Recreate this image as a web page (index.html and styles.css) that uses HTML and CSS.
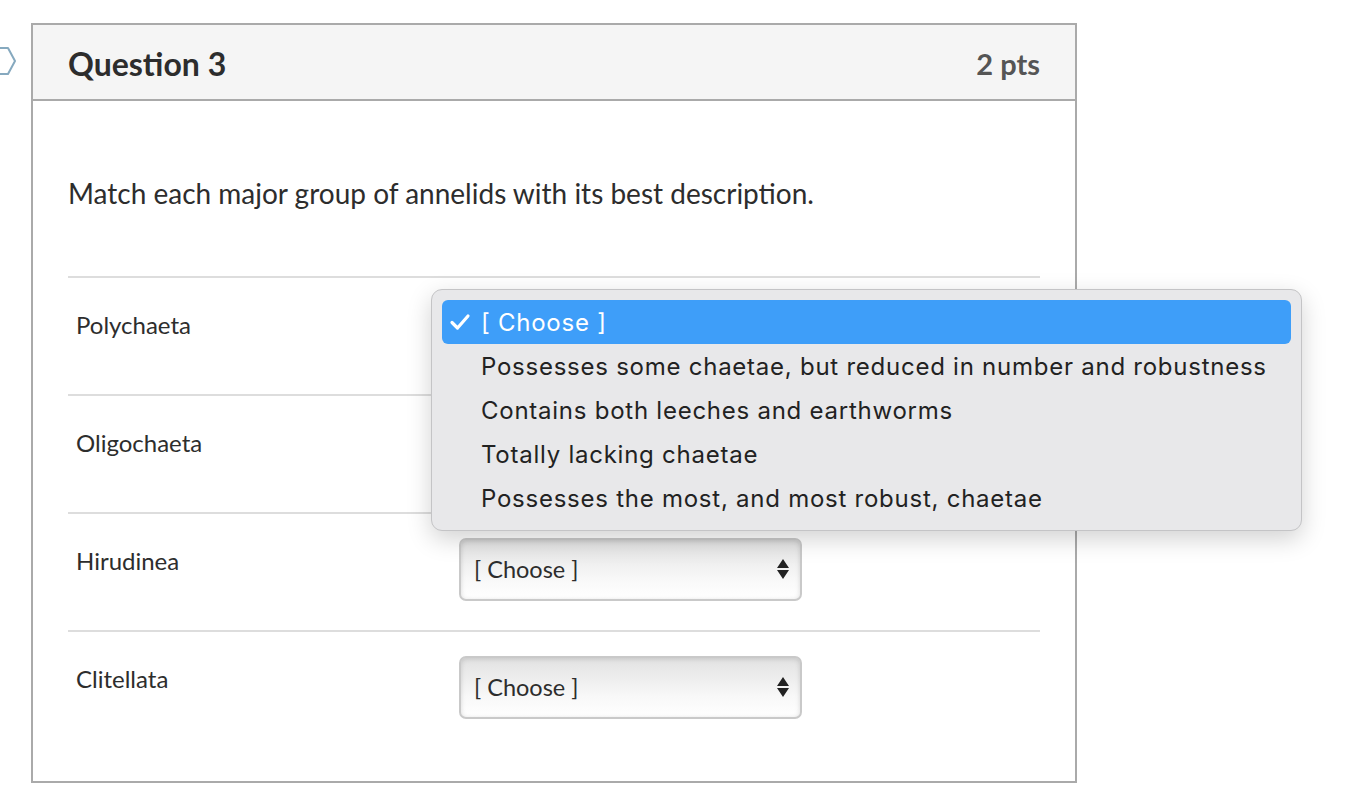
FILE: index.html
```html
<!DOCTYPE html>
<html lang="en">
<head>
    <meta charset="UTF-8">
    <title>Question 3</title>
    <link rel="stylesheet" href="styles.css">
</head>
<body>
    <svg class="flag" width="18" height="30" viewBox="0 0 18 30">
        <polyline points="-4,2 8,2 15,15 8,28 -4,28" fill="none" stroke="#86a9bf" stroke-width="2" stroke-linejoin="round"/>
    </svg>

    <div class="question">
        <header class="question-header">
            <h2>Question 3</h2>
            <span class="points">2 pts</span>
        </header>

        <div class="question-body">
            <p class="question-text">Match each major group of annelids with its best description.</p>

            <div class="answers">
                <div class="answer-row">
                    <div class="answer-label">Polychaeta</div>
                    <div class="answer-select">
                        <div class="select-box">
                            <span>[ Choose ]</span>
                            <svg class="arrows" width="12" height="22" viewBox="0 0 12 22"><path d="M6 1 L12 10 L0 10 Z M6 21 L12 12 L0 12 Z" fill="#222"/></svg>
                        </div>
                    </div>
                </div>
                <div class="answer-row">
                    <div class="answer-label">Oligochaeta</div>
                    <div class="answer-select">
                        <div class="select-box">
                            <span>[ Choose ]</span>
                            <svg class="arrows" width="12" height="22" viewBox="0 0 12 22"><path d="M6 1 L12 10 L0 10 Z M6 21 L12 12 L0 12 Z" fill="#222"/></svg>
                        </div>
                    </div>
                </div>
                <div class="answer-row">
                    <div class="answer-label">Hirudinea</div>
                    <div class="answer-select">
                        <div class="select-box">
                            <span>[ Choose ]</span>
                            <svg class="arrows" width="12" height="22" viewBox="0 0 12 22"><path d="M6 1 L12 10 L0 10 Z M6 21 L12 12 L0 12 Z" fill="#222"/></svg>
                        </div>
                    </div>
                </div>
                <div class="answer-row">
                    <div class="answer-label">Clitellata</div>
                    <div class="answer-select">
                        <div class="select-box">
                            <span>[ Choose ]</span>
                            <svg class="arrows" width="12" height="22" viewBox="0 0 12 22"><path d="M6 1 L12 10 L0 10 Z M6 21 L12 12 L0 12 Z" fill="#222"/></svg>
                        </div>
                    </div>
                </div>
            </div>
        </div>

        <ul class="dropdown">
            <li class="option selected">
                <svg class="check" width="22" height="18" viewBox="0 0 22 18"><polyline points="3,9.5 8.5,15 19,3" fill="none" stroke="#fff" stroke-width="3.2" stroke-linecap="round" stroke-linejoin="round"/></svg>
                [ Choose ]
            </li>
            <li class="option">Possesses some chaetae, but reduced in number and robustness</li>
            <li class="option">Contains both leeches and earthworms</li>
            <li class="option">Totally lacking chaetae</li>
            <li class="option">Possesses the most, and most robust, chaetae</li>
        </ul>
    </div>
</body>
</html>
```

FILE: styles.css
```css
* {
    box-sizing: border-box;
    margin: 0;
    padding: 0;
}

body {
    background: #fff;
    color: #2d2d2d;
    font-family: 'Lato', 'Open Sans', sans-serif;
    padding: 23px 0 0 31px;
}

.flag {
    position: absolute;
    left: 0;
    top: 46px;
}

.question {
    position: relative;
    width: 1046px;
    height: 760px;
    border: 2px solid #aaa;
}

.question-header {
    display: flex;
    justify-content: space-between;
    align-items: center;
    height: 76px;
    padding: 2px 35px 0 35px;
    background: #f5f5f5;
    border-bottom: 2px solid #aaa;
}

.question-header h2 {
    font-size: 32px;
    font-weight: 700;
    color: #2d2d2d;
}

.points {
    font-size: 29px;
    font-weight: 700;
    color: #555;
}

.question-body {
    padding: 74px 35px 0 35px;
}

.question-text {
    font-size: 28px;
    line-height: 36px;
    margin-bottom: 65px;
}

.answer-row {
    display: flex;
    border-top: 2px solid #ddd;
    padding: 24px 0 29px;
}

.answer-label {
    width: 391px;
    padding-left: 8px;
    margin-top: 8px;
    font-size: 24px;
    line-height: 30px;
}

.select-box {
    width: 343px;
    height: 63px;
    display: flex;
    align-items: center;
    justify-content: space-between;
    padding: 0 11px 2px 13px;
    border: 2px solid #c9c9c9;
    border-radius: 7px;
    background: linear-gradient(#e2e2e2, #f8f8f8 65%, #fff);
    box-shadow: inset 0 1px 5px rgba(0, 0, 0, 0.14);
    font-size: 23.5px;
    color: #2d2d2d;
}

.dropdown {
    position: absolute;
    left: 398px;
    top: 264px;
    width: 871px;
    list-style: none;
    padding: 10px;
    background: #e8e8ea;
    border: 1px solid #c4c4c6;
    border-radius: 11px;
    box-shadow: 0 8px 24px rgba(0, 0, 0, 0.18);
    font-family: 'Inter', 'Roboto', sans-serif;
    font-size: 24px;
    letter-spacing: 0.75px;
    color: #222;
}

.option {
    display: flex;
    align-items: center;
    height: 44px;
    padding-left: 39px;
    border-radius: 6px;
}

.option.selected {
    background: #3e9ef9;
    color: #fff;
    padding-left: 7px;
}

.check {
    margin-right: 10px;
}
```
